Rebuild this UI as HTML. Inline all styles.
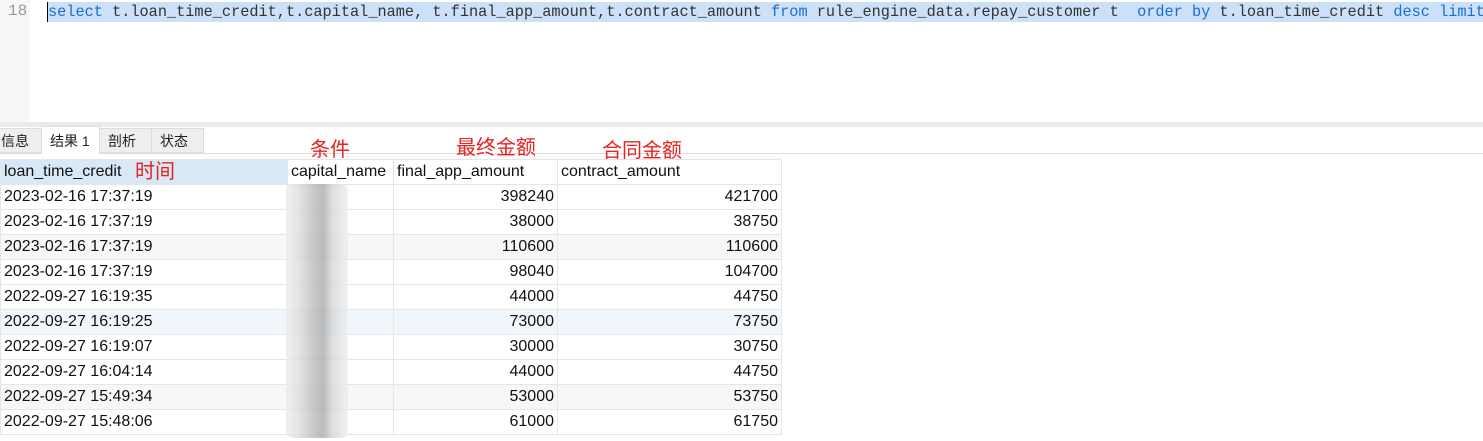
<!DOCTYPE html><html><head><style>
body{margin:0;width:1483px;height:441px;overflow:hidden;background:#fff;font-family:"Liberation Sans","Noto Sans CJK SC",sans-serif;position:relative}
.a{position:absolute}
.code{left:48px;top:2px;height:20px;line-height:20px;font-family:"Liberation Mono",monospace;font-size:15.25px;background:#cce0f7;white-space:pre;color:#333;padding-right:20px}
.k{color:#1a6ed8}.n{color:#2a9b2a}
.tab{top:128px;height:25px;line-height:25px;font-size:14px;color:#222;background:#eee;border:1px solid #ddd;padding:0 8px;box-sizing:border-box}
table{position:absolute;left:0;top:159px;border-collapse:collapse;font-size:16px;color:#111;table-layout:fixed;width:781px}
td{height:24px;line-height:18px;border:1px solid #e6e6e6;padding:0 3px;white-space:nowrap;overflow:hidden;box-sizing:border-box}
tr{height:25px}
.r{text-align:right}
.red{color:#e8231f;font-size:20px;line-height:20px}
</style></head><body>
<div class="a" style="left:0;top:0;width:30px;height:122px;background:#f7f7f7"></div>
<div class="a" style="left:8px;top:2px;font-family:'Liberation Mono',monospace;font-size:16px;color:#999">18</div>
<div class="a" style="left:47px;top:2px;width:1px;height:20px;background:#000"></div>
<div class="a code"><span class="k">select</span> t.loan_time_credit,t.capital_name, t.final_app_amount,t.contract_amount <span class="k">from</span> rule_engine_data.repay_customer t  <span class="k">order by</span> t.loan_time_credit <span class="k">desc limit</span> <span class="n">10</span></div>
<div class="a" style="left:0;top:122px;width:1483px;height:5px;background:#eaeaea"></div>
<div class="a" style="left:0;top:153px;width:1483px;height:1px;background:#ddd"></div>
<div class="a tab" style="left:-8px;width:50px">信息</div>
<div class="a tab" style="left:41px;width:59px;background:#fff;border-bottom-color:#fff;top:126px;height:28px;line-height:28px">结果 1</div>
<div class="a tab" style="left:99px;width:53px">剖析</div>
<div class="a tab" style="left:151px;width:53px">状态</div>
<div class="a red" style="left:310px;top:140px">条件</div>
<div class="a red" style="left:456px;top:138px">最终金额</div>
<div class="a red" style="left:602px;top:141px">合同金额</div>
<table>
<colgroup><col style="width:287px"><col style="width:106px"><col style="width:164px"><col style="width:224px"></colgroup>
<tr><td style="background:#d8e8f6">loan_time_credit</td><td>capital_name</td><td>final_app_amount</td><td>contract_amount</td></tr>
<tr><td>2023-02-16 17:37:19</td><td></td><td class="r">398240</td><td class="r">421700</td></tr>
<tr><td>2023-02-16 17:37:19</td><td></td><td class="r">38000</td><td class="r">38750</td></tr>
<tr style="background:#f7f7f7"><td>2023-02-16 17:37:19</td><td></td><td class="r">110600</td><td class="r">110600</td></tr>
<tr><td>2023-02-16 17:37:19</td><td></td><td class="r">98040</td><td class="r">104700</td></tr>
<tr><td>2022-09-27 16:19:35</td><td></td><td class="r">44000</td><td class="r">44750</td></tr>
<tr style="background:#f1f6fc"><td>2022-09-27 16:19:25</td><td></td><td class="r">73000</td><td class="r">73750</td></tr>
<tr><td>2022-09-27 16:19:07</td><td></td><td class="r">30000</td><td class="r">30750</td></tr>
<tr><td>2022-09-27 16:04:14</td><td></td><td class="r">44000</td><td class="r">44750</td></tr>
<tr style="background:#f7f7f7"><td>2022-09-27 15:49:34</td><td></td><td class="r">53000</td><td class="r">53750</td></tr>
<tr><td>2022-09-27 15:48:06</td><td></td><td class="r">61000</td><td class="r">61750</td></tr>
</table>
<div class="a red" style="left:135px;top:162px">时间</div>
<div class="a" style="left:286px;top:184px;width:62px;height:254px;background:linear-gradient(90deg,#eee 0,#ddd 20%,#bbb 45%,#aaa 60%,#d4d6d8 75%,#eee 100%);opacity:.8;border-radius:6px"></div>
</body></html>
